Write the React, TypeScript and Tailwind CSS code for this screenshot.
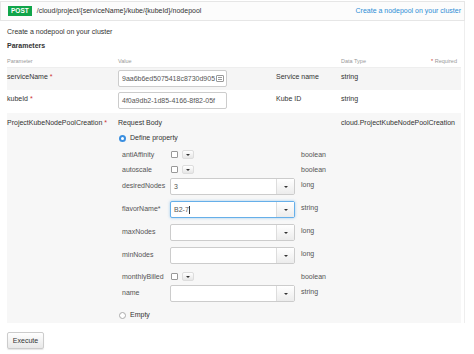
import React from "react";

type Nested = {
  name: string;
  kind: "bool" | "input";
  type: string;
  value?: string;
  required?: boolean;
  focused?: boolean;
};

const nested: Nested[] = [
  { name: "antiAffinity", kind: "bool", type: "boolean" },
  { name: "autoscale", kind: "bool", type: "boolean" },
  { name: "desiredNodes", kind: "input", type: "long", value: "3" },
  { name: "flavorName", kind: "input", type: "string", value: "B2-7", required: true, focused: true },
  { name: "maxNodes", kind: "input", type: "long" },
  { name: "minNodes", kind: "input", type: "long" },
  { name: "monthlyBilled", kind: "bool", type: "boolean" },
  { name: "name", kind: "input", type: "string" },
];

function Caret() {
  return <span className="block w-0 h-0 border-l-[2px] border-r-[2px] border-t-[2px] border-l-transparent border-r-transparent border-t-[#333]" />;
}

function SmallSelect() {
  return (
    <span className="flex items-center justify-center w-[12px] h-[9px] rounded-[2px] border border-[#ddd] bg-gradient-to-b from-white to-[#e6e6e6]">
      <Caret />
    </span>
  );
}

function Radio({ checked }: { checked?: boolean }) {
  return (
    <span
      className={
        checked
          ? "flex items-center justify-center w-[7px] h-[7px] rounded-full bg-[#3b8fe0]"
          : "flex items-center justify-center w-[7px] h-[7px] rounded-full border border-[#aaa] bg-white"
      }
    >
      {checked && <span className="w-[3px] h-[3px] rounded-full bg-white" />}
    </span>
  );
}

function NestedRow({ row }: { row: Nested }) {
  if (row.kind === "bool") {
    return (
      <div className="flex items-center h-[15px]">
        <div className="w-[52px] pl-[4px] text-[#555] whitespace-nowrap">{row.name}</div>
        <div className="w-[131px] flex items-center gap-[4px] pl-[1px]">
          <span className="w-[7px] h-[7px] border border-[#999] rounded-[1px] bg-white" />
          <SmallSelect />
        </div>
        <div className="text-[#555]">{row.type}</div>
      </div>
    );
  }
  return (
    <div className="flex items-start h-[23px] pt-[1px]">
      <div className="w-[52px] pl-[4px] pt-[3px] text-[#555] whitespace-nowrap">
        {row.name}
        {row.required && <span>*</span>}
      </div>
      <div className="w-[131px]">
        <div
          className={
            row.focused
              ? "flex w-[125px] h-[17px] rounded-[2px] border border-[#66afe9] shadow-[0_0_3px_rgba(102,175,233,0.6)] bg-white"
              : "flex w-[125px] h-[17px] rounded-[2px] border border-[#ccc] bg-white"
          }
        >
          <div className="flex-1 flex items-center pl-[3px] text-[#555]">
            {row.value}
            {row.focused && <span className="w-px h-[8px] bg-[#333]" />}
          </div>
          <div className="w-[18px] flex items-center justify-center border-l border-[#ddd] bg-gradient-to-b from-white to-[#ececec]">
            <Caret />
          </div>
        </div>
      </div>
      <div className="pt-[2px] text-[#555]">{row.type}</div>
    </div>
  );
}

export default function App() {
  return (
    <div
      className="w-[474px] h-[354px] bg-white text-[7px] leading-[10px] text-[#333] overflow-hidden"
      style={{ fontFamily: '"Liberation Sans", Arial, sans-serif' }}
    >
      {/* endpoint header */}
      <div className="w-[465px] h-[20px] mt-[1px] flex items-center justify-between pl-[7px] pr-[3px] border border-[#e6e6e6] bg-[#fcfcfc]">
        <div className="flex items-center gap-[5px]">
          <span className="px-[3px] h-[10px] flex items-center bg-[#10a54a] text-white font-bold text-[6.5px]">POST</span>
          <span className="text-[#333]">/cloud/project/{"{serviceName}"}/kube/{"{kubeId}"}/nodepool</span>
        </div>
        <span className="text-[#2d8ed6]">Create a nodepool on your cluster</span>
      </div>

      <div className="w-[465px] border-r border-[#eee] pl-[7px] pr-[3px]">
        <div className="pt-[6px]">Create a nodepool on your cluster</div>
        <div className="pt-[4px] font-bold">Parameters</div>

        {/* table head */}
        <div className="flex h-[12px] mt-[4px] items-center text-[5.5px] text-[#999]">
          <div className="w-[111px]">Parameter</div>
          <div className="w-[223px]">Value</div>
          <div className="flex-1">Data Type</div>
          <div className="pr-[4px]"><span className="text-[#c33]">*</span> Required</div>
        </div>

        {/* serviceName */}
        <div className="flex h-[23px] bg-[#f5f5f5] border-t border-[#eee]">
          <div className="w-[111px] pt-[4px]">serviceName <span className="text-[#c33]">*</span></div>
          <div className="w-[158px] pt-[2px]">
            <div className="flex items-center w-[109px] h-[17px] border border-[#ccc] rounded-[2px] bg-white pl-[3px] overflow-hidden text-[#555]">
              <span className="flex-1 whitespace-nowrap overflow-hidden">9aa6b6ed5075418c8730d905</span>
              <span className="mr-[2px] w-[8px] h-[7px] border border-[#999] rounded-[1px] flex flex-col justify-around px-[1px]">
                <span className="h-px bg-[#999]" />
                <span className="h-px bg-[#999]" />
              </span>
            </div>
          </div>
          <div className="w-[65px] pt-[4px]">Service name</div>
          <div className="pt-[4px]">string</div>
        </div>

        {/* kubeId */}
        <div className="flex h-[23px] bg-white">
          <div className="w-[111px] pt-[4px]">kubeId <span className="text-[#c33]">*</span></div>
          <div className="w-[158px] pt-[2px]">
            <div className="flex items-center w-[109px] h-[17px] border border-[#ccc] rounded-[2px] bg-white pl-[3px] overflow-hidden text-[#555] whitespace-nowrap">
              4f0a9db2-1d85-4166-8f82-05f
            </div>
          </div>
          <div className="w-[65px] pt-[4px]">Kube ID</div>
          <div className="pt-[4px]">string</div>
        </div>

        {/* body */}
        <div className="flex h-[210px] bg-[#f7f7f7]">
          <div className="w-[111px] pt-[5px]">ProjectKubeNodePoolCreation <span className="text-[#c33]">*</span></div>
          <div className="w-[223px] pt-[5px]">
            <div>Request Body</div>
            <div className="flex items-center gap-[4px] mt-[5px] h-[10px] pl-[1px]">
              <Radio checked />
              <span>Define property</span>
            </div>
            <div className="mt-[4px]">
              {nested.map((r) => (
                <NestedRow key={r.name} row={r} />
              ))}
            </div>
            <div className="flex items-center gap-[4px] mt-[3px] h-[10px] pl-[1px]">
              <Radio />
              <span>Empty</span>
            </div>
          </div>
          <div className="pt-[5px]">cloud.ProjectKubeNodePoolCreation</div>
        </div>
      </div>

      <div className="pl-[7px] pt-[9px]">
        <button className="h-[17px] w-[37px] rounded-[2px] border border-[#ccc] bg-gradient-to-b from-white to-[#e8e8e8] text-[7px] text-[#333] shadow-[0_1px_1px_rgba(0,0,0,0.1)]">
          Execute
        </button>
      </div>
    </div>
  );
}
